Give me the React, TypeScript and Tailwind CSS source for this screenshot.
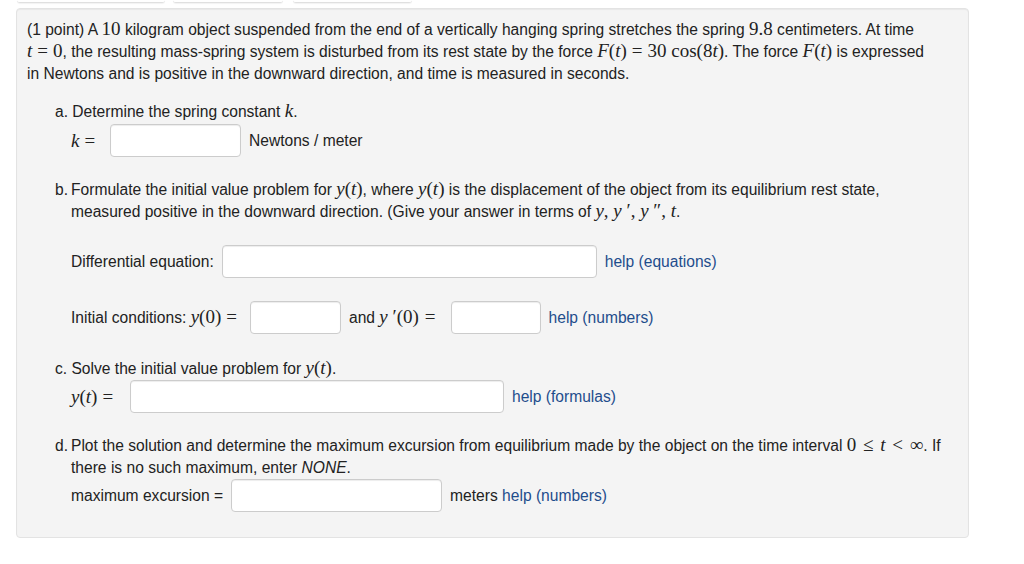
import type { ReactNode } from 'react';

function M({ children, className = '' }: { children: ReactNode; className?: string }) {
  return (
    <span className={`font-['Liberation_Serif',serif] text-[19px] leading-none ${className}`}>
      {children}
    </span>
  );
}

function V({ children }: { children: ReactNode }) {
  return <i className="font-['Liberation_Serif',serif]">{children}</i>;
}

function Eq() {
  return <span className="mx-[5px]">=</span>;
}

function Field({ width }: { width: string }) {
  return (
    <input
      type="text"
      className={`${width} h-[33px] shrink-0 rounded-[4px] border border-[#cccccc] bg-white shadow-[inset_0_1px_1px_rgba(0,0,0,0.075)] outline-none`}
    />
  );
}

function Help({ children }: { children: ReactNode }) {
  return <a className="cursor-pointer text-[#1f4d8c]">{children}</a>;
}

function App() {
  return (
    <div className="h-[564px] w-[1024px] bg-white font-['Liberation_Sans',Arial,sans-serif] text-[15.6px] leading-[22px] text-[#222]">
      <div className="flex h-[3px]">
        <div className="ml-[17px] w-[148px] rounded-b-[3px] border-b border-[#e0e0e0] shadow-[0_1px_1px_rgba(0,0,0,0.05)]" />
        <div className="ml-[8px] w-[110px] rounded-b-[3px] border-b border-[#e0e0e0] shadow-[0_1px_1px_rgba(0,0,0,0.05)]" />
        <div className="ml-[10px] w-[119px] rounded-b-[3px] border-b border-[#e0e0e0] shadow-[0_1px_1px_rgba(0,0,0,0.05)]" />
      </div>

      <div className="ml-4 mt-[5px] h-[530px] w-[953px] rounded-[4px] border border-[#e3e3e3] bg-[#f4f4f4] px-[10px] pt-[10px] shadow-[inset_0_1px_1px_rgba(0,0,0,0.05)]">
        <p className="whitespace-nowrap">
          (1 point) A <M>10</M> kilogram object suspended from the end of a vertically hanging spring stretches the
          spring <M>9.8</M> centimeters. At time
          <br />
          <M>
            <V>t</V>
            <Eq />0
          </M>
          , the resulting mass-spring system is disturbed from its rest state by the force{' '}
          <M>
            <V>F</V>(<V>t</V>)<Eq />
            30 cos(8<V>t</V>)
          </M>
          . The force <M><V>F</V>(<V>t</V>)</M> is expressed
          <br />
          in Newtons and is positive in the downward direction, and time is measured in seconds.
        </p>

        <div className="ml-[28px] mt-[16px]">
          <p>
            a. Determine the spring constant <M><V>k</V></M>.
          </p>
          <div className="ml-[16px] mt-px flex items-center gap-[8px]">
            <M className="w-[31px] whitespace-nowrap">
              <V>k</V>
              <span className="ml-[5px]">=</span>
            </M>
            <Field width="w-[131px]" />
            <span>Newtons / meter</span>
          </div>

          <div className="mt-[22px] flex">
            <span className="w-[16px]">b.</span>
            <p className="whitespace-nowrap">
              Formulate the initial value problem for <M><V>y</V>(<V>t</V>)</M>, where <M><V>y</V>(<V>t</V>)</M> is
              the displacement of the object from its equilibrium rest state,
              <br />
              measured positive in the downward direction. (Give your answer in terms of{' '}
              <M>
                <V>y</V>, <V>y</V> ′, <V>y</V> ″, <V>t</V>
              </M>
              .
            </p>
          </div>

          <div className="ml-[16px] mt-[22px] flex items-center gap-[8px]">
            <span className="whitespace-nowrap">Differential equation:</span>
            <Field width="w-[375px]" />
            <Help>help (equations)</Help>
          </div>

          <div className="ml-[16px] mt-[23px] flex items-center gap-[8px] whitespace-nowrap">
            <span>
              Initial conditions:{' '}
              <M>
                <V>y</V>(0)
                <Eq />
              </M>
            </span>
            <Field width="w-[91px]" />
            <span>
              and{' '}
              <M>
                <V>y</V> ′(0)
                <span className="ml-[6px] mr-[7px]">=</span>
              </M>
            </span>
            <Field width="w-[90px]" />
            <Help>help (numbers)</Help>
          </div>

          <p className="mt-[24px]">
            c. Solve the initial value problem for <M><V>y</V>(<V>t</V>)</M>.
          </p>
          <div className="ml-[16px] flex items-center gap-[8px]">
            <M className="w-[51px] whitespace-nowrap">
              <V>y</V>(<V>t</V>)<Eq />
            </M>
            <Field width="w-[374px]" />
            <Help>help (formulas)</Help>
          </div>

          <div className="mt-[22px] flex">
            <span className="w-[16px]">d.</span>
            <p className="whitespace-nowrap">
              Plot the solution and determine the maximum excursion from equilibrium made by the object on the time
              interval{' '}
              <M>
                0 <span className="mx-[2px]">≤</span> <V>t</V> <span className="mx-[2px]">&lt;</span> ∞
              </M>
              . If
              <br />
              there is no such maximum, enter <i>NONE</i>.
            </p>
          </div>
          <div className="ml-[16px] flex items-center gap-[8px] whitespace-nowrap">
            <span>maximum excursion =</span>
            <Field width="w-[211px]" />
            <span>
              meters <Help>help (numbers)</Help>
            </span>
          </div>
        </div>
      </div>
    </div>
  );
}

export default App;
